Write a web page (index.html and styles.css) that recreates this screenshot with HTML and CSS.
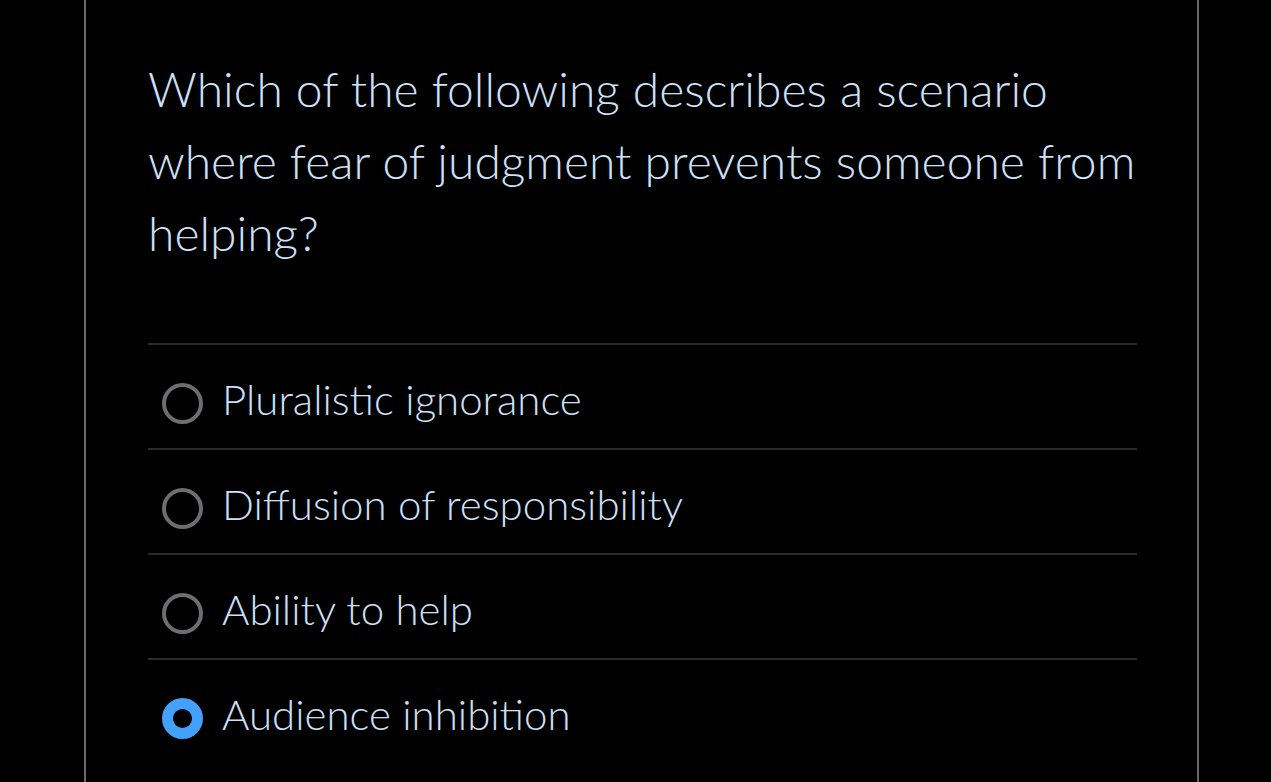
FILE: index.html
```html
<!DOCTYPE html>
<html lang="en">
<head>
<meta charset="utf-8">
<title>Question</title>
<link rel="stylesheet" href="styles.css">
</head>
<body>
<main class="panel">
  <h1 class="question">Which of the following describes a scenario where fear of judgment prevents someone from helping?</h1>
  <ul class="options">
    <li class="option"><span class="radio"></span><span class="label">Pluralistic ignorance</span></li>
    <li class="option"><span class="radio"></span><span class="label">Diffusion of responsibility</span></li>
    <li class="option"><span class="radio"></span><span class="label">Ability to help</span></li>
    <li class="option selected"><span class="radio"></span><span class="label">Audience inhibition</span></li>
  </ul>
</main>
</body>
</html>
```
FILE: styles.css
```css
html, body {
  margin: 0;
  padding: 0;
  background: #000;
  height: 100%;
  overflow: hidden;
}
body {
  font-family: "Lato", "Open Sans", sans-serif;
  color: #cce0fa;
}
.panel {
  box-sizing: border-box;
  margin-left: 84px;
  width: 1115px;
  min-height: 100vh;
  border-left: 2px solid #686868;
  border-right: 2px solid #686868;
  padding: 53px 60px 0 62px;
}
.question {
  margin: 0;
  font-size: 48px;
  line-height: 72px;
  font-weight: 300;
  letter-spacing: 0;
}
.options {
  list-style: none;
  margin: 74px 0 0;
  padding: 0;
}
.option {
  display: flex;
  align-items: flex-start;
  border-top: 2px solid #2b2b2b;
  padding: 29px 0 24px 14px;
}
.radio {
  box-sizing: border-box;
  flex: none;
  width: 41px;
  height: 41px;
  border-radius: 50%;
  border: 4px solid #6e6e72;
  margin-top: 9px;
  margin-right: 19px;
}
.selected .radio {
  border: 11px solid #43a0fc;
  background: #000;
}
.label {
  font-size: 42px;
  line-height: 50px;
  font-weight: 300;
}
```
